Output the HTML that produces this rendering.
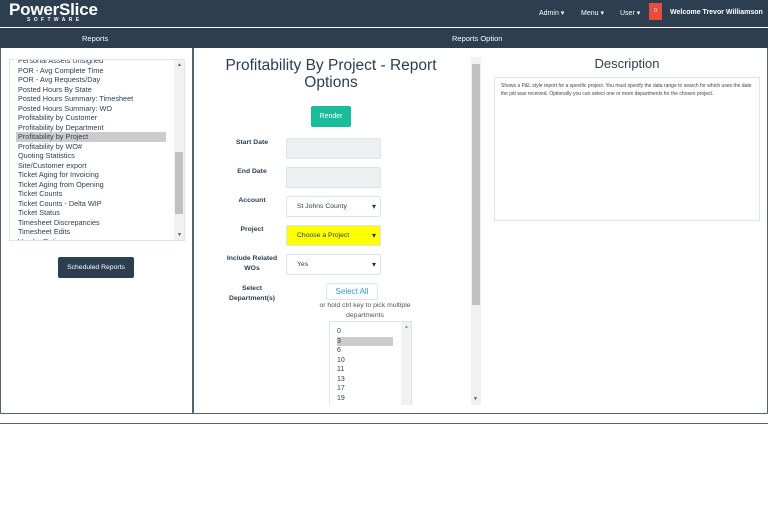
<!DOCTYPE html>
<html><head><style>
*{box-sizing:border-box;margin:0;padding:0}
body{width:768px;height:528px;background:#fff;font-family:"Liberation Sans",sans-serif;position:relative;overflow:hidden;color:#2c3e50}
.a{position:absolute}
.hdr{left:0;top:0;width:768px;height:27px;background:#2c3e50}
.bar{left:0;top:28px;width:768px;height:20px;background:#2c3e50;color:#fff;font-size:8px;font-weight:bold}
.list div{font-size:7.3px;height:9.5px;line-height:9.5px;padding-left:8px;white-space:nowrap;color:#2c3e50}
.lbl{font-size:6.8px;font-weight:bold;text-align:center;width:62px;left:221px;line-height:10px;color:#2c3e50}
.inp{left:286px;width:95px;height:21px;border:1px solid #dce4ec;border-radius:2px;font-size:6.8px;line-height:19px;padding-left:10px}
.inp.s:after{content:"▾";position:absolute;right:4px;top:0;font-size:8px;color:#333}
</style></head><body>
<div class="a hdr"></div>
<div class="a" style="left:9px;top:1px;color:#fff;font-size:17px;font-weight:bold;letter-spacing:-0.2px;line-height:18px">PowerSlice</div>
<div class="a" style="left:27px;top:17px;color:#fff;font-size:5px;font-weight:bold;letter-spacing:3.4px;line-height:6px">SOFTWARE</div>
<div class="a" style="left:539px;top:9px;color:#fff;font-size:7px">Admin ▾</div>
<div class="a" style="left:581px;top:9px;color:#fff;font-size:7px">Menu ▾</div>
<div class="a" style="left:620px;top:9px;color:#fff;font-size:7px">User ▾</div>
<div class="a" style="left:649px;top:3px;width:13px;height:17px;background:#e74c3c;color:#fff;font-size:5px;text-align:center;line-height:16px">0</div>
<div class="a" style="left:670px;top:9px;color:#fff;font-size:7px;font-weight:bold">Welcome Trevor Williamson</div>
<div class="a bar"></div>
<div class="a" style="left:82px;top:34px;color:#fff;font-size:7.5px">Reports</div>
<div class="a" style="left:452px;top:34px;color:#fff;font-size:7.5px">Reports Option</div>
<div class="a" style="left:0;top:48px;width:768px;height:366px;border:1px solid #556270;border-top:none"></div>
<div class="a" style="left:192px;top:48px;width:2px;height:366px;background:#556270"></div>
<div class="a" style="left:0;top:423px;width:768px;height:1px;background:#556270"></div>
<!-- left list -->
<div class="a" style="left:9px;top:59px;width:176px;height:182px;border:1px solid #dce4ec;overflow:hidden">
<div class="a list" style="left:0;top:-4px;width:165px">
<div>Personal Assets Unsigned</div><div>POR - Avg Complete Time</div><div>POR - Avg Requests/Day</div><div>Posted Hours By State</div><div>Posted Hours Summary: Timesheet</div><div>Posted Hours Summary: WO</div><div>Profitability by Customer</div><div>Profitability by Department</div><div style="background:#ccc;margin-left:6px;padding-left:2px;width:150px">Profitability by Project</div><div>Profitability by WO#</div><div>Quoting Statistics</div><div>Site/Customer export</div><div>Ticket Aging for Invoicing</div><div>Ticket Aging from Opening</div><div>Ticket Counts</div><div>Ticket Counts - Delta WIP</div><div>Ticket Status</div><div>Timesheet Discrepancies</div><div>Timesheet Edits</div><div>Vendor Ratios</div></div>
<div class="a" style="right:0;top:0;width:10px;height:180px;background:#f1f1f1"></div>
<div class="a" style="right:1px;top:92px;width:8px;height:62px;background:#c1c1c1"></div>
<div class="a" style="right:2px;top:2px;font-size:5px;color:#555">▲</div>
<div class="a" style="right:2px;bottom:2px;font-size:5px;color:#555">▼</div>
</div>
<div class="a" style="left:58px;top:257px;width:76px;height:21px;background:#2c3e50;border-radius:2px;color:#fff;font-size:6.8px;text-align:center;line-height:21px">Scheduled Reports</div>
<!-- middle -->
<div class="a" style="left:210px;top:58px;width:242px;text-align:center;font-size:15.5px;line-height:16.5px;color:#2c3e50">Profitability By Project - Report Options</div>
<div class="a" style="left:311px;top:106px;width:40px;height:21px;background:#1abc9c;border-radius:2px;color:#fff;font-size:7px;text-align:center;line-height:21px">Render</div>
<div class="a lbl" style="top:138px">Start Date</div>
<div class="a inp" style="top:138px;background:#ecf0f1"></div>
<div class="a lbl" style="top:167px">End Date</div>
<div class="a inp" style="top:167px;background:#ecf0f1"></div>
<div class="a lbl" style="top:196px">Account</div>
<div class="a inp s" style="top:196px">St Johns County</div>
<div class="a lbl" style="top:225px">Project</div>
<div class="a inp s" style="top:225px;background:#ffff00">Choose a Project</div>
<div class="a lbl" style="top:254px">Include Related WOs</div>
<div class="a inp s" style="top:254px">Yes</div>
<div class="a lbl" style="top:284px">Select Department(s)</div>
<div class="a" style="left:326px;top:283px;width:52px;height:17px;border:1px solid #dce4ec;border-radius:2px;color:#3498db;font-size:8px;text-align:center;line-height:15px">Select All</div>
<div class="a" style="left:300px;top:301px;width:130px;text-align:center;font-size:6.8px;line-height:10px;color:#555">or hold ctrl key to pick multiple departments</div>
<div class="a" style="left:329px;top:321px;width:83px;height:84px;border:1px solid #dce4ec;border-bottom:none;overflow:hidden;font-size:7px;color:#2c3e50">
<div class="a" style="left:7px;top:5px;line-height:9.5px"><div>0</div><div style="background:#ccc;width:56px">3</div><div>6</div><div>10</div><div>11</div><div>13</div><div>17</div><div>19</div></div>
<div class="a" style="right:0;top:0;width:10px;height:84px;background:#f1f1f1"></div>
<div class="a" style="right:2px;top:2px;font-size:5px;color:#999">▲</div>
</div>
<div class="a" style="left:471px;top:57px;width:10px;height:348px;background:#f1f1f1"></div>
<div class="a" style="left:472px;top:64px;width:8px;height:241px;background:#c1c1c1"></div>
<div class="a" style="left:473px;top:396px;font-size:5px;color:#555">▼</div>
<!-- right -->
<div class="a" style="left:494px;top:56px;width:266px;text-align:center;font-size:13px;color:#2c3e50">Description</div>
<div class="a" style="left:494px;top:77px;width:266px;height:144px;border:1px solid #dce4ec;padding:4px 6px;font-size:5px;line-height:8px;color:#444">Shows a P&amp;L style report for a specific project.  You must specify the data range to search for which uses the date the job was received. Optionally you can select one or more departments for the chosen project.</div>
</body></html>
